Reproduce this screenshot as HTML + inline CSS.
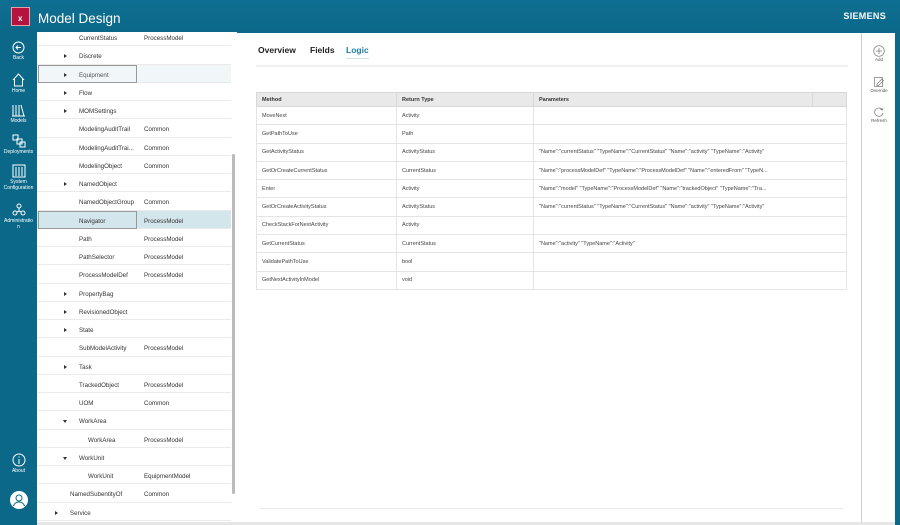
<!DOCTYPE html>
<html><head><meta charset="utf-8"><style>
*{margin:0;padding:0;box-sizing:border-box}
body{width:900px;height:525px;overflow:hidden;background:#0b6889;font-family:"Liberation Sans",sans-serif;position:relative}
.hdr{position:absolute;left:0;top:0;width:900px;height:33px;background:linear-gradient(#0f6f92,#0b6889)}
.logo{position:absolute;left:11px;top:7px;width:19px;height:19px;background:#b5133d;border:1px solid #e6a0b0}
.logo span{position:absolute;left:6px;top:6px;color:#fff;font-size:8px;font-weight:bold}
.title{position:absolute;left:38px;top:11px;color:#fff;font-size:13.5px}
.siem{position:absolute;right:14px;top:11px;color:#fff;font-size:9px;font-weight:bold;letter-spacing:.3px}
.side{position:absolute;left:0;top:33px;width:37px;height:492px}
.si{position:absolute;left:0;width:37px;text-align:center;color:#fff;font-size:5px}
.si svg{display:block;margin:0 auto 1px}
.tree{position:absolute;left:37px;top:32px;width:200px;height:490px;background:#fff;overflow:hidden}
.row{position:absolute;left:0;width:194px;height:18.25px;border-bottom:1px solid #eaeaea;font-size:6.2px;color:#333}
.row .n{position:absolute;top:7px}
.row .m{position:absolute;left:107px;top:7px}
.row .a{position:absolute;left:27px;top:8px;width:0;height:0;border-left:3px solid #333;border-top:2.5px solid transparent;border-bottom:2.5px solid transparent}
.row .d{position:absolute;left:26px;top:9px;width:0;height:0;border-top:3px solid #333;border-left:2.5px solid transparent;border-right:2.5px solid transparent}
.sel{background:#d3e6ec}
.box{position:absolute;left:1px;top:0;width:99px;height:18px;border:1px solid #999}
.sb{position:absolute;left:195px;top:122px;width:3px;height:340px;background:#bbb;border-radius:2px}
.main{position:absolute;left:237px;top:33px;width:624px;height:489px;background:#fff}
.tabs{position:absolute;top:12px;font-size:8.5px;font-weight:bold;color:#222}
.tl{position:absolute;left:19px;top:32px;width:592px;height:2px;background:#f0f0f0}
table{position:absolute;left:19px;top:59px;width:591px;border-collapse:collapse;font-size:5.5px;color:#444}
td,th{height:18.3px;border:1px solid #e4e4e4;padding-left:5px;text-align:left;white-space:nowrap;overflow:hidden}
th{height:14px;background:#e9e9e9;font-weight:bold;color:#333;border-color:#d8d8d8}
.bl{position:absolute;left:23px;top:475px;width:583px;height:1px;background:#e8e8e8}
.act{position:absolute;left:861px;top:33px;width:34px;height:489px;background:#fff;border-left:1px solid #ccc}
.ac{position:absolute;left:0;width:34px;text-align:center;font-size:4.5px;color:#555}
.ac svg{display:block;margin:0 auto}
.bot{position:absolute;left:37px;top:522px;width:858px;height:3px;background:#e6e6e6}
</style></head><body>
<div class="hdr"><div class="logo"><span>x</span></div><div class="title">Model Design</div><div class="siem">SIEMENS</div></div>
<div class="side">
<div class="si" style="top:8px"><svg width="13" height="13" viewBox="0 0 13 13"><circle cx="6.5" cy="6.5" r="5.5" fill="none" stroke="#fff" stroke-width="1"/><path d="M9 6.5H4M6 4.5L4 6.5 6 8.5" fill="none" stroke="#fff"/></svg>Back</div>
<div class="si" style="top:40px"><svg width="13" height="14" viewBox="0 0 13 14"><path d="M1 7L6.5 1 12 7M2.5 6v7h8V6" fill="none" stroke="#fff"/></svg>Home</div>
<div class="si" style="top:70px"><svg width="13" height="14" viewBox="0 0 13 14"><path d="M1 2v11M4 2v11M7 2v11M9 2l3 11M0 13h13" fill="none" stroke="#fff"/></svg>Models</div>
<div class="si" style="top:101px"><svg width="14" height="14" viewBox="0 0 14 14"><rect x="1" y="1" width="5" height="5" fill="none" stroke="#fff"/><rect x="5" y="5" width="5" height="5" fill="none" stroke="#fff"/><rect x="8" y="8" width="5" height="5" fill="none" stroke="#fff"/></svg>Deployments</div>
<div class="si" style="top:131px"><svg width="14" height="14" viewBox="0 0 14 14"><rect x="1" y="1" width="12" height="12" fill="none" stroke="#fff"/><path d="M4 3v9M7 3v9M10 3v9" stroke="#fff"/></svg>System<br>Configuration</div>
<div class="si" style="top:170px"><svg width="14" height="14" viewBox="0 0 14 14"><circle cx="7" cy="3" r="2" fill="none" stroke="#fff"/><circle cx="3" cy="10" r="2" fill="none" stroke="#fff"/><circle cx="11" cy="10" r="2" fill="none" stroke="#fff"/><path d="M7 5v3M5 9l2-1 2 1" stroke="#fff" fill="none"/></svg>Administratio<br>n</div>
<div class="si" style="top:420px"><svg width="14" height="14" viewBox="0 0 14 14"><circle cx="7" cy="7" r="6" fill="none" stroke="#fff"/><path d="M7 6v5M7 3.5v1" stroke="#fff"/></svg>About</div>
<div class="si" style="top:458px"><svg width="18" height="18" viewBox="0 0 18 18"><circle cx="9" cy="9" r="9" fill="#fff"/><circle cx="9" cy="7" r="3" fill="none" stroke="#0b6889"/><path d="M3.5 15c1-3 3-4 5.5-4s4.5 1 5.5 4" fill="none" stroke="#0b6889"/></svg></div>
</div>
<div class="tree">
<div class="row" style="top:-4px"><span class="n" style="left:42px">CurrentStatus</span><span class="m">ProcessModel</span></div>
<div class="row" style="top:14.25px"><i class="a"></i><span class="n" style="left:42px">Discrete</span></div>
<div class="row" style="top:32.5px;background:#f1f6f8"><div class="box"></div><i class="a"></i><span class="n" style="left:42px;color:#555">Equipment</span></div>
<div class="row" style="top:50.75px"><i class="a"></i><span class="n" style="left:42px">Flow</span></div>
<div class="row" style="top:69px"><i class="a"></i><span class="n" style="left:42px">MOMSettings</span></div>
<div class="row" style="top:87.25px"><span class="n" style="left:42px">ModelingAuditTrail</span><span class="m">Common</span></div>
<div class="row" style="top:105.5px"><span class="n" style="left:42px">ModelingAuditTrai...</span><span class="m">Common</span></div>
<div class="row" style="top:123.75px"><span class="n" style="left:42px">ModelingObject</span><span class="m">Common</span></div>
<div class="row" style="top:142px"><i class="a"></i><span class="n" style="left:42px">NamedObject</span></div>
<div class="row" style="top:160.25px"><span class="n" style="left:42px">NamedObjectGroup</span><span class="m">Common</span></div>
<div class="row sel" style="top:178.5px"><div class="box"></div><span class="n" style="left:42px">Navigator</span><span class="m">ProcessModel</span></div>
<div class="row" style="top:196.75px"><span class="n" style="left:42px">Path</span><span class="m">ProcessModel</span></div>
<div class="row" style="top:215px"><span class="n" style="left:42px">PathSelector</span><span class="m">ProcessModel</span></div>
<div class="row" style="top:233.25px"><span class="n" style="left:42px">ProcessModelDef</span><span class="m">ProcessModel</span></div>
<div class="row" style="top:251.5px"><i class="a"></i><span class="n" style="left:42px">PropertyBag</span></div>
<div class="row" style="top:269.75px"><i class="a"></i><span class="n" style="left:42px">RevisionedObject</span></div>
<div class="row" style="top:288px"><i class="a"></i><span class="n" style="left:42px">State</span></div>
<div class="row" style="top:306.25px"><span class="n" style="left:42px">SubModelActivity</span><span class="m">ProcessModel</span></div>
<div class="row" style="top:324.5px"><i class="a"></i><span class="n" style="left:42px">Task</span></div>
<div class="row" style="top:342.75px"><span class="n" style="left:42px">TrackedObject</span><span class="m">ProcessModel</span></div>
<div class="row" style="top:361px"><span class="n" style="left:42px">UOM</span><span class="m">Common</span></div>
<div class="row" style="top:379.25px"><i class="d"></i><span class="n" style="left:42px">WorkArea</span></div>
<div class="row" style="top:397.5px"><span class="n" style="left:51px">WorkArea</span><span class="m">ProcessModel</span></div>
<div class="row" style="top:415.75px"><i class="d"></i><span class="n" style="left:42px">WorkUnit</span></div>
<div class="row" style="top:434px"><span class="n" style="left:51px">WorkUnit</span><span class="m">EquipmentModel</span></div>
<div class="row" style="top:452.25px"><span class="n" style="left:33px">NamedSubentityOf</span><span class="m">Common</span></div>
<div class="row" style="top:470.5px"><i class="a" style="left:18px"></i><span class="n" style="left:33px">Service</span></div>
<div class="sb"></div>
</div>
<div class="main">
<div class="tabs" style="left:21px">Overview</div>
<div class="tabs" style="left:73px">Fields</div>
<div class="tabs" style="left:109px;color:#1a7fa8;border-bottom:1px solid #cfe3ea;padding-bottom:3px">Logic</div>
<div class="tl"></div>
<table>
<tr><th style="width:140px">Method</th><th style="width:137px">Return Type</th><th style="width:279px">Parameters</th><th></th></tr>
<tr><td>MoveNext</td><td>Activity</td><td colspan="2"></td></tr>
<tr><td>GetPathToUse</td><td>Path</td><td colspan="2"></td></tr>
<tr><td>GetActivityStatus</td><td>ActivityStatus</td><td colspan="2">"Name":"currentStatus" "TypeName":"CurrentStatus" "Name":"activity" "TypeName":"Activity"</td></tr>
<tr><td>GetOrCreateCurrentStatus</td><td>CurrentStatus</td><td colspan="2">"Name":"processModelDef" "TypeName":"ProcessModelDef" "Name":"enteredFrom" "TypeN...</td></tr>
<tr><td>Enter</td><td>Activity</td><td colspan="2">"Name":"model" "TypeName":"ProcessModelDef" "Name":"trackedObject" "TypeName":"Tra...</td></tr>
<tr><td>GetOrCreateActivityStatus</td><td>ActivityStatus</td><td colspan="2">"Name":"currentStatus" "TypeName":"CurrentStatus" "Name":"activity" "TypeName":"Activity"</td></tr>
<tr><td>CheckStackForNextActivity</td><td>Activity</td><td colspan="2"></td></tr>
<tr><td>GetCurrentStatus</td><td>CurrentStatus</td><td colspan="2">"Name":"activity" "TypeName":"Activity"</td></tr>
<tr><td>ValidatePathToUse</td><td>bool</td><td colspan="2"></td></tr>
<tr><td>GetNextActivityInModel</td><td>void</td><td colspan="2"></td></tr>
</table>
<div class="bl"></div>
</div>
<div class="act">
<div class="ac" style="top:12px"><svg width="12" height="12" viewBox="0 0 12 12"><circle cx="6" cy="6" r="5.3" fill="none" stroke="#777" stroke-width=".7"/><path d="M6 3v6M3 6h6" stroke="#777" stroke-width=".7"/></svg>Add</div>
<div class="ac" style="top:43px"><svg width="12" height="12" viewBox="0 0 12 12"><rect x="1.5" y="1.5" width="8" height="9" fill="none" stroke="#777" stroke-width=".7"/><path d="M4 8l5-5 1.5 1.5-5 5H4z" fill="none" stroke="#777" stroke-width=".7"/></svg>Override</div>
<div class="ac" style="top:73px"><svg width="12" height="12" viewBox="0 0 12 12"><path d="M9.5 4A4.2 4.2 0 1 0 10 7" fill="none" stroke="#777" stroke-width=".7"/><path d="M7.5 3.5l2 .5.5-2" fill="none" stroke="#777" stroke-width=".7"/></svg>Refresh</div>
</div>
<div class="bot"></div>
</body></html>
